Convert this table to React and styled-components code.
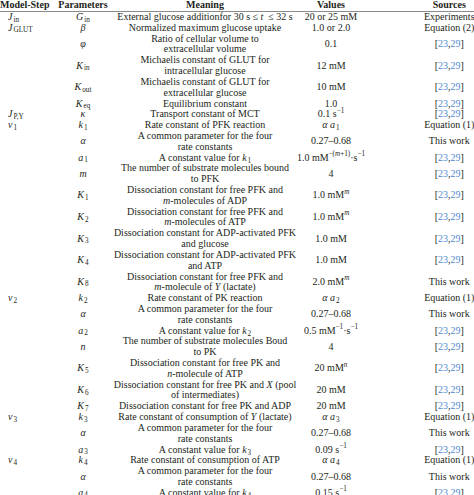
import React from 'react';
import styled, {createGlobalStyle} from 'styled-components'

const GlobalStyle = createGlobalStyle`
    html, body {
        margin:0;
        padding:0;
        background:#fff;
    }
    body {
        font-family: 'Liberation Serif', 'DejaVu Serif', serif;
        color:#231f20;
        overflow:hidden;
    }
`

const Table = styled.div`
    display:grid;
    grid-template-columns: 58px 50px 194px 58px 1fr;
    width:474px;
    font-size:10px;
    line-height:10.82px;
`

const Cell = styled.div`
    display:flex;
    align-items:center;
    justify-content:${p => p.$left ? 'flex-start' : 'center'};
    padding-left:${p => p.$pad || 0}px;
    white-space:nowrap;
    text-align:center;
`

const HeadCell = styled(Cell)`
    font-weight:bold;
    height:11px;
    border-bottom:1px solid #8a8a8a;
`

const I = styled.i`
    font-style:italic;
`

const Sub = styled.span`
    font-size:72%;
    line-height:0;
    position:relative;
    top:0.3em;
    margin-left:1px;
    font-style:normal;
`

const Sup = styled.span`
    font-size:72%;
    line-height:0;
    position:relative;
    top:-0.55em;
`

const Link = styled.span`
    color:#4f8ad1;
`

const Ref = () => <>[<Link>23</Link>,<Link>29</Link>]</>

const Sym = ({v, s}) => <><I>{v}</I>{s && <Sub>{s}</Sub>}</>

const rows = [
    [<Sym v="J" s="in"/>, <Sym v="G" s="in"/>, <>External glucose additionfor 30 s ≤ <I>t</I> &nbsp;≤ 32 s</>, '20 or 25 mM', 'Experiments'],
    [<Sym v="J" s="GLUT"/>, <Sym v="β"/>, 'Normalized maximum glucose uptake', '1.0 or 2.0', 'Equation (2)'],
    [null, <Sym v="φ"/>, <>Ratio of cellular volume to<br/>extracellular volume</>, '0.1', <Ref/>],
    [null, <Sym v="K" s="in"/>, <>Michaelis constant of GLUT for<br/>intracellular glucose</>, '12 mM', <Ref/>],
    [null, <Sym v="K" s="out"/>, <>Michaelis constant of GLUT for<br/>extracellular glucose</>, '10 mM', <Ref/>],
    [null, <Sym v="K" s="eq"/>, 'Equilibrium constant', '1.0', <Ref/>],
    [<Sym v="J" s="P,Y"/>, <Sym v="κ"/>, 'Transport constant of MCT', <>0.1 s<Sup>−1</Sup></>, <Ref/>],
    [<Sym v="v" s="1"/>, <Sym v="k" s="1"/>, 'Rate constant of PFK reaction', <><I>α a</I><Sub>1</Sub></>, 'Equation (1)'],
    [null, <Sym v="α"/>, <>A common parameter for the four<br/>rate constants</>, '0.27–0.68', 'This work'],
    [null, <Sym v="a" s="1"/>, <>A constant value for <I>k</I><Sub>1</Sub></>, <>1.0 mM<Sup>−(<I>m</I>+1)</Sup>·s<Sup>−1</Sup></>, <Ref/>],
    [null, <Sym v="m"/>, <>The number of substrate molecules bound<br/>to PFK</>, '4', <Ref/>],
    [null, <Sym v="K" s="1"/>, <>Dissociation constant for free PFK and<br/><I>m</I>-molecules of ADP</>, <>1.0 mM<Sup><I>m</I></Sup></>, <Ref/>],
    [null, <Sym v="K" s="2"/>, <>Dissociation constant for free PFK and<br/><I>m</I>-molecules of ATP</>, <>1.0 mM<Sup><I>m</I></Sup></>, <Ref/>],
    [null, <Sym v="K" s="3"/>, <>Dissociation constant for ADP-activated PFK<br/>and glucose</>, '1.0 mM', <Ref/>],
    [null, <Sym v="K" s="4"/>, <>Dissociation constant for ADP-activated PFK<br/>and ATP</>, '1.0 mM', <Ref/>],
    [null, <Sym v="K" s="8"/>, <>Dissociation constant for free PFK and<br/><I>m</I>-molecule of <I>Y</I> (lactate)</>, <>2.0 mM<Sup><I>m</I></Sup></>, 'This work'],
    [<Sym v="v" s="2"/>, <Sym v="k" s="2"/>, 'Rate constant of PK reaction', <><I>α a</I><Sub>2</Sub></>, 'Equation (1)'],
    [null, <Sym v="α"/>, <>A common parameter for the four<br/>rate constants</>, '0.27–0.68', 'This work'],
    [null, <Sym v="a" s="2"/>, <>A constant value for <I>k</I><Sub>2</Sub></>, <>0.5 mM<Sup>−1</Sup>·s<Sup>−1</Sup></>, <Ref/>],
    [null, <Sym v="n"/>, <>The number of substrate molecules Boud<br/>to PK</>, '4', <Ref/>],
    [null, <Sym v="K" s="5"/>, <>Dissociation constant for free PK and<br/><I>n</I>-molecule of ATP</>, <>20 mM<Sup><I>n</I></Sup></>, <Ref/>],
    [null, <Sym v="K" s="6"/>, <>Dissociation constant for free PK and <I>X</I> (pool<br/>of intermediates)</>, '20 mM', <Ref/>],
    [null, <Sym v="K" s="7"/>, 'Dissociation constant for free PK and ADP', '20 mM', <Ref/>],
    [<Sym v="v" s="3"/>, <Sym v="k" s="3"/>, <>Rate constant of consumption of <I>Y</I> (lactate)</>, <><I>α a</I><Sub>3</Sub></>, 'Equation (1)'],
    [null, <Sym v="α"/>, <>A common parameter for the four<br/>rate constants</>, '0.27–0.68', 'This work'],
    [null, <Sym v="a" s="3"/>, <>A constant value for <I>k</I><Sub>3</Sub></>, <>0.09 s<Sup>−1</Sup></>, <Ref/>],
    [<Sym v="v" s="4"/>, <Sym v="k" s="4"/>, 'Rate constant of consumption of ATP', <><I>α a</I><Sub>4</Sub></>, 'Equation (1)'],
    [null, <Sym v="α"/>, <>A common parameter for the four<br/>rate constants</>, '0.27–0.68', 'This work'],
    [null, <Sym v="a" s="4"/>, <>A constant value for <I>k</I><Sub>4</Sub></>, <>0.15 s<Sup>−1</Sup></>, <Ref/>],
]

const App = () => {
    return(
        <>
        <GlobalStyle/>
        <Table>
            <HeadCell $left>Model-Step</HeadCell>
            <HeadCell>Parameters</HeadCell>
            <HeadCell>Meaning</HeadCell>
            <HeadCell>Values</HeadCell>
            <HeadCell $pad={64}>Sources</HeadCell>
            {rows.map((r, i) => (
                <React.Fragment key={i}>
                    <Cell $left $pad={8}>{r[0]}</Cell>
                    <Cell>{r[1]}</Cell>
                    <Cell><div>{r[2]}</div></Cell>
                    <Cell>{r[3]}</Cell>
                    <Cell $pad={64}>{r[4]}</Cell>
                </React.Fragment>
            ))}
        </Table>
        </>
    )
}

export default App
